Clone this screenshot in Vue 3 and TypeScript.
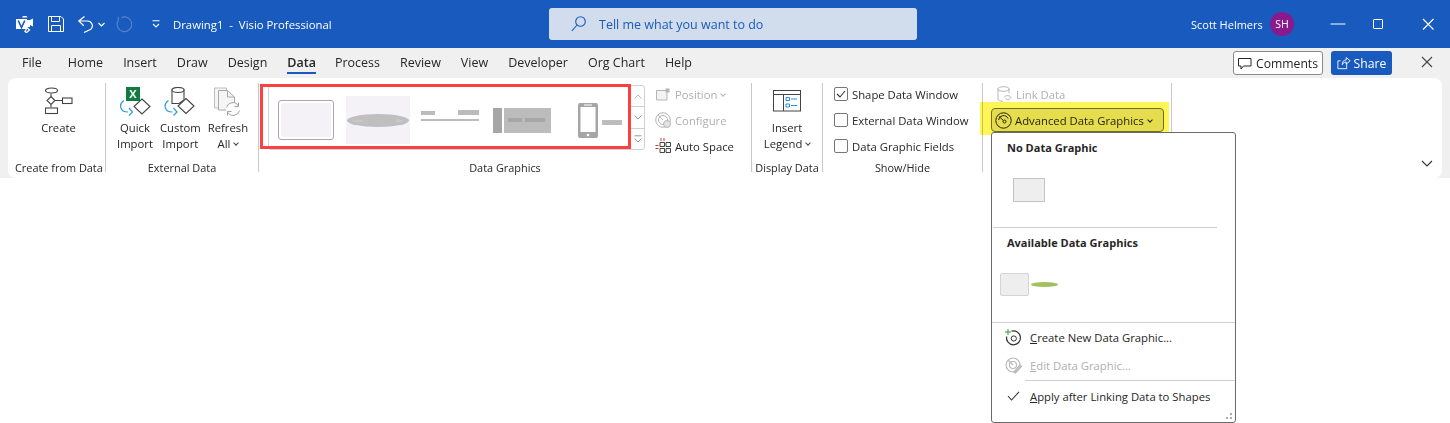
<script setup lang="ts">
const tabs = ["File", "Home", "Insert", "Draw", "Design", "Data", "Process", "Review", "View", "Developer", "Org Chart", "Help"];
</script>

<template>
  <div class="app">
    <header class="titlebar">
      <div class="qat">
        <svg class="qat-logo" width="18" height="17" viewBox="0 0 18 17">
          <path d="M6 1.500a3 3 0 0 1 5.500 0z M11 4h3l3-1.500v8L14 9v2h-3z" fill="#fff" />
          <rect x="0" y="3" width="11" height="10" fill="#fff" />
          <path d="M2.200 4.500 5.500 11.500 8.800 4.500" fill="none" stroke="#185abd" stroke-width="1.600" />
          <path d="M9 15.500 11 11.500 13.500 14 10.500 16.500z" fill="none" stroke="#fff" stroke-width="1.300" />
        </svg>
        <svg class="qat-save" width="16" height="16" viewBox="0 0 16 16" fill="none" stroke="#fff">
          <path d="M.5.500h12.500l2.500 2.500v12.500H.5z M3.500.5v5h8v-5 M3.500 15.500v-6h9v6" />
        </svg>
        <svg class="qat-undo" width="16" height="17" viewBox="0 0 16 17" fill="none" stroke="#fff" stroke-width="1.200">
          <path d="M.8 5H9.500a4.800 4.800 0 0 1 3.300 8.300L6 16.500 M6.500.5.800 5l5 4.800" />
        </svg>
        <svg class="qat-caret" width="7" height="5" viewBox="0 0 7 5" fill="none" stroke="#fff" stroke-width="1.200"><path d="M.5 1l3 3 3-3" /></svg>
        <svg class="qat-redo" width="16" height="17" viewBox="0 0 16 17" fill="none" stroke="#5482cb" stroke-width="1.200">
          <path d="M5.500 1.600A7.300 7.300 0 1 1 2.200 4.500 M2.200.8v4.200h.2" />
        </svg>
        <svg class="qat-more" width="8" height="8" viewBox="0 0 8 8" fill="none" stroke="#fff" stroke-width="1.100"><path d="M.5.800h7 M1 4l3 3 3-3" /></svg>
        <span class="doc-title">Drawing1&nbsp; -&nbsp; Visio Professional</span>
      </div>
      <div class="search">
        <svg width="15" height="16" viewBox="0 0 15 16" fill="none" stroke="#185abd" stroke-width="1.100">
          <circle cx="9.500" cy="5.500" r="4.800" /><path d="M6 9 .8 15" />
        </svg>
        <span>Tell me what you want to do</span>
      </div>
      <div class="account">
        <span class="user-name">Scott Helmers</span>
        <span class="avatar">SH</span>
        <div class="window-buttons">
          <svg width="16" height="16" viewBox="0 0 16 16" stroke="#fff"><path d="M.5 8h15" /></svg>
          <svg class="win-max" width="16" height="16" viewBox="0 0 16 16" stroke="#fff" fill="none"><rect x="3.500" y="3.500" width="9" height="9" rx=".5" /></svg>
          <svg class="win-close" width="16" height="16" viewBox="0 0 16 16" stroke="#fff" stroke-width="1.100"><path d="M3 3l10.500 10.500 M13.500 3 3 13.500" /></svg>
        </div>
      </div>
    </header>

    <nav class="tabbar">
      <ul class="tabs">
        <li v-for="tab in tabs" :key="tab" :class="{ active: tab === 'Data' }">{{ tab }}</li>
      </ul>
      <div class="tab-actions">
        <button class="comments">
          <svg width="14" height="14" viewBox="0 0 14 14" fill="none" stroke="#262626"><path d="M.5 2.500h12.500v7.500H5.500l-2.500 3v-3H.5z" /></svg>
          Comments
        </button>
        <button class="share">
          <svg width="14" height="14" viewBox="0 0 16 15" fill="none" stroke="#fff"><path d="M11 7.500v6.500H1V5h3 M6 9.500C6 5.500 8 4 10.500 4V1.200L15 5l-4.500 3.700V6.300C8.500 6.300 7 7.500 6 9.500z" /></svg>
          Share
        </button>
        <svg class="tab-close" width="12" height="12" viewBox="0 0 12 12" stroke="#444" stroke-width="1.100"><path d="M1 1l10 10 M11 1 1 11" /></svg>
      </div>
    </nav>

    <div class="ribbon-wrap">
      <section class="ribbon">
        <div class="group g-create">
          <div class="group-body">
            <div class="big-btn">
              <svg class="big-icon" width="28" height="28" viewBox="0 0 28 28" fill="#fff" stroke="#444" stroke-width="1.100">
                <path d="M6 6v3 M10 13h7 M6 17v3" fill="none" />
                <ellipse cx="6.500" cy="3" rx="6" ry="2.500" />
                <path d="M6 9l4 4-4 4-4-4z" />
                <rect x="17.500" y="10.500" width="9.500" height="5.500" />
                <rect x=".5" y="20.500" width="12" height="5.500" />
              </svg>
              <span>Create</span>
            </div>
          </div>
          <div class="group-label">Create from Data</div>
        </div>

        <div class="group g-external">
          <div class="group-body">
            <div class="big-btn">
              <svg class="big-icon" width="32" height="29" viewBox="0 0 32 29">
                <rect x="7" y="0" width="14" height="14" fill="#107c41" />
                <text x="14" y="11" class="excel-x">X</text>
                <path d="M23 12l8 7.500-8 7.500-8-7.500z" fill="#fff" stroke="#444" stroke-width="1.100" />
                <path d="M5 13.500C-.5 17 .5 25 9 25 M10 21l3.500 4-3.500 3.500" fill="none" stroke="#2e9bdc" stroke-width="1.200" />
              </svg>
              <span>Quick<br />Import</span>
            </div>
            <div class="big-btn">
              <svg class="big-icon" width="32" height="29" viewBox="0 0 32 29">
                <path d="M8 3v13.500h7L20 13V3z" fill="#fff" stroke="#444" stroke-width="1.100" />
                <ellipse cx="14" cy="3" rx="6" ry="2.500" fill="#fff" stroke="#444" stroke-width="1.100" />
                <path d="M22 11.500l8 7.500-8 7.500-8-7.500z" fill="#fff" stroke="#444" stroke-width="1.100" />
                <path d="M4.500 13.500C-1 17 0 25 8.500 25 M9.500 21l3.500 4-3.500 3.500" fill="none" stroke="#2e9bdc" stroke-width="1.200" />
              </svg>
              <span>Custom<br />Import</span>
            </div>
            <div class="big-btn">
              <svg class="big-icon" width="28" height="29" viewBox="0 0 28 29">
                <path d="M.5 1h12v20H.5z" fill="#f5f5f5" stroke="#bdbdbd" />
                <path d="M4.500 3.500h9l7 6.500v13h-16z" fill="#f5f5f5" stroke="#a8a8a8" />
                <path d="M13.500 3.500v6.500h7" fill="none" stroke="#a8a8a8" />
                <circle cx="19" cy="22" r="7" fill="#fff" />
                <path d="M12.500 20.500a6.500 6.500 0 0 1 12-1.500 M25.500 23.500a6.500 6.500 0 0 1-12 1.500 M24.500 15.500v4h-4 M13.500 28.500v-4h4" fill="none" stroke="#a0a0a0" />
              </svg>
              <span>Refresh<br />All <i class="caret"></i></span>
            </div>
          </div>
          <div class="group-label">External Data</div>
        </div>

        <div class="group g-graphics">
          <div class="group-body">
            <div class="gallery">
              <div class="gallery-items">
                <div class="thumb-plain"><div></div></div>
                <div class="thumb-ellipse">
                  <div><span>Label</span><span>Abc</span></div>
                </div>
                <div class="thumb-line">
                  <div class="tl-bars"><i></i><b></b></div>
                  <div class="tl-rule"></div>
                </div>
                <div class="thumb-block">
                  <i></i>
                  <div><b></b><b></b></div>
                </div>
                <div class="thumb-phone">
                  <svg width="21" height="35" viewBox="0 0 21 35">
                    <rect width="20" height="35" rx="2" fill="#a6a6a6" />
                    <rect x="2.500" y="4" width="15" height="25" fill="#fff" />
                    <rect x="6" y="1.500" width="8" height="1" fill="#fff" />
                    <circle cx="10" cy="32" r="1.300" fill="#fff" />
                  </svg>
                  <i></i>
                </div>
              </div>
              <div class="gallery-scroll">
                <div><svg width="8" height="5" viewBox="0 0 8 5" fill="none" stroke="#bbb"><path d="M.5 4.500 4 1l3.500 3.500" /></svg></div>
                <div><svg width="8" height="5" viewBox="0 0 8 5" fill="none" stroke="#999"><path d="M.5.500 4 4 7.500.5" /></svg></div>
                <div><svg width="8" height="8" viewBox="0 0 8 8" fill="none" stroke="#999"><path d="M.5.800h7 M.5 3.500 4 7l3.500-3.500" /></svg></div>
              </div>
            </div>
            <div class="small-col">
              <div class="small-btn disabled">
                <svg width="15" height="13" viewBox="0 0 15 13" fill="#f3f3f3" stroke="#b5b5b5"><path d="M.5 2.500h10.500v9.500H.5z" /><rect x="9.500" y=".5" width="4" height="4" fill="#b5b5b5" stroke="none" /></svg>
                <span>Position <i class="caret"></i></span>
              </div>
              <div class="small-btn disabled">
                <svg width="17" height="17" viewBox="0 0 17 17" fill="none" stroke="#b5b5b5">
                  <circle cx="8" cy="8" r="7.300" /><circle cx="8" cy="8" r="4.500" /><path d="M3 3l5 5" />
                  <circle cx="12" cy="12" r="3.500" fill="#e4e4e4" />
                </svg>
                <span>Configure</span>
              </div>
              <div class="small-btn">
                <svg width="16" height="16" viewBox="0 0 16 16" fill="none">
                  <path d="M5.500 0v3 M8.500 0v3 M0 7.500h3 M0 10.500h3" stroke="#e0392b" />
                  <path d="M4.500 4.500h4.500v4h-4.500z M10.500 4.500h4.500v4h-4.500z M4.500 10.500h4.500v4h-4.500z M10.500 10.500h4.500v4h-4.500z" stroke="#444" />
                </svg>
                <span class="strong">Auto Space</span>
              </div>
            </div>
          </div>
          <div class="group-label">Data Graphics</div>
        </div>

        <div class="group g-display">
          <div class="group-body">
            <div class="big-btn">
              <svg class="big-icon legend-icon" width="28" height="22" viewBox="0 0 28 22" fill="none">
                <rect x=".5" y=".5" width="27" height="20.500" stroke="#444" />
                <path d="M.5 4.500h27 M10.500 4.500v16.500" stroke="#444" />
                <path d="M13 7.500h3.500v3H13z M13 14h3.500v3H13z M18 9h6 M18 15.500h6" stroke="#2e8fd6" />
              </svg>
              <span>Insert<br />Legend <i class="caret"></i></span>
            </div>
          </div>
          <div class="group-label">Display Data</div>
        </div>

        <div class="group g-show">
          <div class="group-body rows">
            <label class="check"><i class="box on"><svg width="10" height="8" viewBox="0 0 10 8" fill="none" stroke="#333" stroke-width="1.100"><path d="M1 4l3 3 5-6" /></svg></i>Shape Data Window</label>
            <label class="check"><i class="box"></i>External Data Window</label>
            <label class="check"><i class="box"></i>Data Graphic Fields</label>
          </div>
          <div class="group-label">Show/Hide</div>
        </div>

        <div class="group g-advanced">
          <div class="group-body rows">
            <div class="small-btn disabled link-data">
              <svg width="15" height="16" viewBox="0 0 15 16" fill="none" stroke="#b5b5b5">
                <path d="M1 3v10c0 1.500 2 2.300 5 2.300M12 3v4" /><ellipse cx="6.500" cy="3" rx="5.700" ry="2.300" />
                <path d="M7 11.500c1.500-2.500 6-2.500 7 0-1 2.500-4.500 3-5.500.5" />
              </svg>
              <span>Link Data</span>
            </div>
            <div class="adv-btn">
              <svg width="17" height="17" viewBox="0 0 17 17" fill="none" stroke="#262626">
                <circle cx="8.500" cy="8.500" r="7.700" /><path d="M3.500 8a5 5 0 0 1 9.500-1.500" />
                <circle cx="9.500" cy="9.500" r="1.500" /><path d="M4 4.500l4.200 3.800" />
              </svg>
              <span>Advanced Data Graphics <i class="caret dark"></i></span>
            </div>
          </div>
        </div>

        <svg class="collapse" width="12" height="7" viewBox="0 0 12 7" fill="none" stroke="#333" stroke-width="1.100"><path d="M1 1l5 5 5-5" /></svg>

        <div class="mark-red"></div>
        <div class="mark-yellow"></div>
      </section>
    </div>

    <div class="menu">
      <h4>No Data Graphic</h4>
      <div class="menu-thumb"></div>
      <hr class="short" />
      <h4 class="second">Available Data Graphics</h4>
      <div class="menu-available">
        <div></div>
        <i></i>
      </div>
      <hr />
      <div class="menu-item">
        <svg width="17" height="17" viewBox="0 0 17 17" fill="none" stroke="#333">
          <path d="M6.500 2.100A7 7 0 1 1 1.600 7.500" stroke-width="1.200" /><circle cx="8.800" cy="9.500" r="2.600" />
          <path d="M3 0v6 M0 3h6" stroke="#2e9e3f" />
        </svg>
        <span><u>C</u>reate New Data Graphic...</span>
      </div>
      <div class="menu-item muted">
        <svg width="17" height="17" viewBox="0 0 17 17" fill="none" stroke="#b8b8b8" stroke-width="1.200">
          <circle cx="8" cy="8" r="7" /><circle cx="8" cy="8" r="3.500" /><path d="M3 3l5 5 M9 15l6-7 1.500 1.500-6 6.500z" />
        </svg>
        <span><u>E</u>dit Data Graphic...</span>
      </div>
      <hr class="indent" />
      <div class="menu-item last">
        <svg class="tick" width="13" height="10" viewBox="0 0 13 10" fill="none" stroke="#333" stroke-width="1.100"><path d="M1 5l3.500 4L12 .8" /></svg>
        <span><u>A</u>pply after Linking Data to Shapes</span>
      </div>
      <div class="grip"><i></i><i></i><i></i></div>
    </div>
  </div>
</template>

<style>
html,
body {
  margin: 0;
  background: #fff;
}
</style>

<style scoped>
.app {
  position: relative;
  width: 1450px;
  height: 423px;
  overflow: hidden;
  background: #fff;
  color: #262626;
  font-family: "Open Sans", "Noto Sans", sans-serif;
  font-size: 11.3px;
}

.titlebar {
  display: flex;
  align-items: center;
  height: 48px;
  background: #185abd;
  color: #fff;
}
.qat {
  display: flex;
  align-items: center;
  width: 549px;
  padding-left: 16px;
  box-sizing: border-box;
}
.qat-save {
  margin-left: 14px;
}
.qat-undo {
  margin-left: 14px;
}
.qat-caret {
  margin-left: 4px;
}
.qat-redo {
  margin-left: 11px;
}
.qat-more {
  margin-left: 20px;
}
.doc-title {
  margin-left: 13px;
  font-size: 11.35px;
}
.search {
  display: flex;
  align-items: center;
  gap: 13px;
  width: 368px;
  height: 32px;
  padding-left: 22px;
  box-sizing: border-box;
  border-radius: 3px;
  background: #d1dced;
  color: #1c5cb9;
  font-size: 12.5px;
}
.account {
  display: flex;
  align-items: center;
  margin-left: 274px;
}
.user-name {
  width: 79px;
  font-size: 11px;
}
.avatar {
  display: flex;
  align-items: center;
  justify-content: center;
  width: 24px;
  height: 24px;
  border-radius: 50%;
  background: #8a1a8c;
  font-size: 10.5px;
}
.window-buttons {
  display: flex;
  margin-left: 36px;
}
.win-max {
  margin-left: 24px;
}
.win-close {
  margin-left: 34px;
}

.tabbar {
  display: flex;
  justify-content: space-between;
  height: 30px;
  background: #f0f0f0;
}
.tabs {
  display: flex;
  gap: 20px;
  margin: 0;
  padding: 0 0 0 22px;
  list-style: none;
  font-size: 12.5px;
}
.tabs li {
  position: relative;
  line-height: 30px;
}
.tabs li:first-child {
  margin-right: 6px;
}
.tabs li.active {
  margin-right: -1px;
  font-weight: 600;
}
.tabs li.active::after {
  content: "";
  position: absolute;
  left: 0;
  right: 0;
  bottom: 4px;
  height: 2px;
  background: #185abd;
}
.tab-actions {
  display: flex;
  align-items: center;
  padding: 0 17px 0 0;
}
.tab-actions button {
  display: flex;
  align-items: center;
  justify-content: center;
  height: 24px;
  padding: 0;
  box-sizing: border-box;
  border-radius: 3px;
  font: inherit;
  font-size: 12.2px;
}
.comments {
  gap: 4px;
  width: 90px;
  border: 1px solid #8a8a8a;
  background: #fff;
  color: #262626;
}
.share {
  gap: 3px;
  width: 61px;
  margin: 0 0 0 8px;
  border: 0;
  background: #185abd;
  color: #fff;
}
.tab-close {
  margin-left: 29px;
  margin-top: -2px;
}

.ribbon-wrap {
  height: 100px;
  padding: 0 8px;
  box-sizing: border-box;
  background: #f0f0f0;
}
.ribbon {
  position: relative;
  display: flex;
  height: 100px;
  padding: 5px 0 6px;
  box-sizing: border-box;
  border-radius: 8px;
  background: #fff;
}
.group {
  display: flex;
  flex-direction: column;
  box-sizing: border-box;
  height: 89px;
  border-right: 1px solid #c9c9c9;
}
.group-body {
  display: flex;
  flex: 1;
  min-height: 0;
}
.group-label {
  height: 16px;
  margin-bottom: -4px;
  line-height: 16px;
  text-align: center;
  white-space: nowrap;
  font-size: 10.9px;
}
.g-create {
  width: 98px;
  padding: 0 3px 0 7px;
}
.g-create .big-btn {
  width: 100%;
}
.g-external {
  width: 153px;
}
.g-external .group-body {
  gap: 7px;
  padding-left: 11px;
}
.g-graphics {
  width: 493px;
}
.g-graphics .group-body {
  padding-left: 9px;
}
.g-display {
  width: 71px;
}
.g-display .big-btn {
  width: 100%;
}
.g-show {
  width: 160px;
}
.g-show .rows {
  padding-left: 11px;
}
.g-advanced {
  width: 189px;
}
.g-advanced .rows {
  padding-left: 8px;
}
.rows {
  flex-direction: column;
  gap: 2px;
  margin-top: -1px;
}

.big-btn {
  display: flex;
  flex-direction: column;
  align-items: center;
  text-align: center;
  line-height: 16px;
  white-space: nowrap;
}
.big-icon {
  flex: none;
  height: 29px;
  margin: 4px 0;
}
.legend-icon {
  height: 22px;
  margin: 7px 0 8px;
}
.excel-x {
  fill: #fff;
  font-size: 11px;
  font-weight: 700;
  text-anchor: middle;
}
.caret {
  display: inline-block;
  width: 3px;
  height: 3px;
  margin: 0 0 3px 1px;
  border-right: 1px solid #444;
  border-bottom: 1px solid #444;
  transform: rotate(45deg);
}
.disabled .caret {
  border-color: #b5b5b5;
}

.gallery {
  display: flex;
  width: 377px;
  height: 65px;
  margin-top: 2px;
  box-sizing: border-box;
  border: 1px solid #d0d0d0;
  border-radius: 3px;
}
.gallery-items {
  display: flex;
  flex: 1;
  align-items: center;
  padding: 5px 0 0 9px;
}
.gallery-scroll {
  display: flex;
  flex-direction: column;
  flex: none;
  width: 13px;
  border-left: 1px solid #d0d0d0;
}
.gallery-scroll div {
  display: flex;
  flex: 1;
  align-items: center;
  justify-content: center;
}
.gallery-scroll div + div {
  border-top: 1px solid #d0d0d0;
}
.thumb-plain {
  width: 56px;
  height: 40px;
  padding: 2px;
  box-sizing: border-box;
  border: 1px solid #a9a9a9;
  border-radius: 3px;
}
.thumb-plain div {
  height: 100%;
  border-radius: 3px;
  background: #f4f1f7;
}
.thumb-ellipse {
  display: flex;
  align-items: center;
  width: 64px;
  height: 48px;
  margin-left: 12px;
  padding: 0 1px;
  box-sizing: border-box;
  background: #f4f1f7;
}
.thumb-ellipse div {
  display: flex;
  justify-content: space-between;
  align-items: center;
  flex: 1;
  height: 13px;
  padding: 0 6px;
  border-radius: 50%;
  background: #bfbfbf;
  color: #d6d6d6;
  font-size: 4px;
}
.thumb-line {
  width: 58px;
  margin-left: 11px;
  margin-top: -9px;
}
.tl-bars {
  display: flex;
  align-items: flex-end;
  justify-content: space-between;
}
.tl-bars i {
  width: 14px;
  height: 4px;
  background: #bcbcbc;
}
.tl-bars b {
  width: 21px;
  height: 5px;
  background: #bcbcbc;
}
.tl-rule {
  height: 2px;
  margin-top: 4px;
  background: #bcbcbc;
}
.thumb-block {
  display: flex;
  gap: 2px;
  height: 25px;
  margin-left: 14px;
}
.thumb-block i {
  width: 9px;
  background: #a6a6a6;
}
.thumb-block div {
  display: flex;
  align-items: center;
  gap: 3px;
  width: 47px;
  padding-left: 4px;
  box-sizing: border-box;
  background: #bcbcbc;
}
.thumb-block b {
  width: 14px;
  height: 4px;
  background: #a6a6a6;
}
.thumb-block b + b {
  width: 20px;
}
.thumb-phone {
  display: flex;
  align-items: center;
  gap: 3px;
  margin-left: 27px;
}
.thumb-phone i {
  width: 20px;
  height: 5px;
  margin-top: 4px;
  background: #bcbcbc;
}

.small-col {
  display: flex;
  flex-direction: column;
  gap: 2px;
  margin: -1px 0 0 10px;
}
.small-btn {
  position: relative;
  display: flex;
  align-items: center;
  height: 24px;
  white-space: nowrap;
}
.small-btn svg {
  flex: none;
  width: 17px;
  margin-right: 3px;
}
.small-btn.disabled {
  color: #b0b0b0;
}
.link-data {
  padding-left: 5px;
}
.check {
  display: flex;
  align-items: center;
  gap: 4px;
  height: 24px;
  white-space: nowrap;
}
.box {
  display: flex;
  align-items: center;
  justify-content: center;
  width: 12px;
  height: 12px;
  border: 1px solid #777;
  border-radius: 2px;
  background: #fff;
}
.adv-btn {
  position: relative;
  display: flex;
  align-items: center;
  gap: 3px;
  width: 173px;
  height: 24px;
  padding-left: 3px;
  box-sizing: border-box;
  border: 1px solid #6f6f6f;
  border-radius: 4px;
  background: #e6e6e6;
  white-space: nowrap;
}
.caret.dark {
  border-color: #262626;
}
.collapse {
  position: absolute;
  right: 9px;
  bottom: 11px;
}
.mark-red {
  position: absolute;
  left: 252px;
  top: 6px;
  width: 371px;
  height: 65px;
  box-sizing: border-box;
  border: 3px solid #ff4040;
  pointer-events: none;
}
.mark-yellow {
  position: absolute;
  left: 972px;
  top: 24px;
  width: 189px;
  height: 33px;
  background: #fff556;
  mix-blend-mode: multiply;
  pointer-events: none;
}

.menu {
  position: absolute;
  left: 991px;
  top: 132px;
  width: 245px;
  height: 291px;
  box-sizing: border-box;
  border: 1px solid #6a6a6a;
  border-radius: 3px;
  background: #fff;
}
.menu h4 {
  margin: 7px 0 0 15px;
  line-height: 16px;
  font-size: 11px;
  font-weight: 700;
}
.menu hr {
  height: 1px;
  margin: 0;
  border: 0;
  background: #cfcfcf;
}
.menu hr.short {
  width: 224px;
  margin: 25px 0 0 1px;
}
.menu hr.indent {
  margin: 1px 0 0 33px;
}
.menu-thumb {
  width: 32px;
  height: 24px;
  margin: 22px 0 0 21px;
  box-sizing: border-box;
  border: 1px solid #c4c4c4;
  background: #eee;
}
.menu-available {
  display: flex;
  align-items: center;
  gap: 2px;
  margin: 22px 0 26px 8px;
}
.menu-available div {
  width: 29px;
  height: 23px;
  box-sizing: border-box;
  border: 1px solid #d4d4d4;
  border-radius: 2px;
  background: #eee;
}
.menu-available i {
  width: 27px;
  height: 5px;
  border-radius: 50%;
  background: #a4c05e;
}
.menu-item {
  display: flex;
  align-items: center;
  gap: 8px;
  height: 28px;
  padding-left: 13px;
  white-space: nowrap;
}
.menu-item.muted {
  color: #b0b0b0;
}
.menu-item.last {
  height: 30px;
  padding-top: 1px;
  box-sizing: border-box;
}
.tick {
  width: 17px;
  margin-top: -2px;
}
.grip {
  position: absolute;
  right: 3px;
  bottom: 3px;
  display: grid;
  grid-template-columns: 2px 2px;
  gap: 2px;
}
.grip i {
  width: 2px;
  height: 2px;
  background: #aaa;
}
.grip i:first-child {
  grid-column: 2;
}
</style>
